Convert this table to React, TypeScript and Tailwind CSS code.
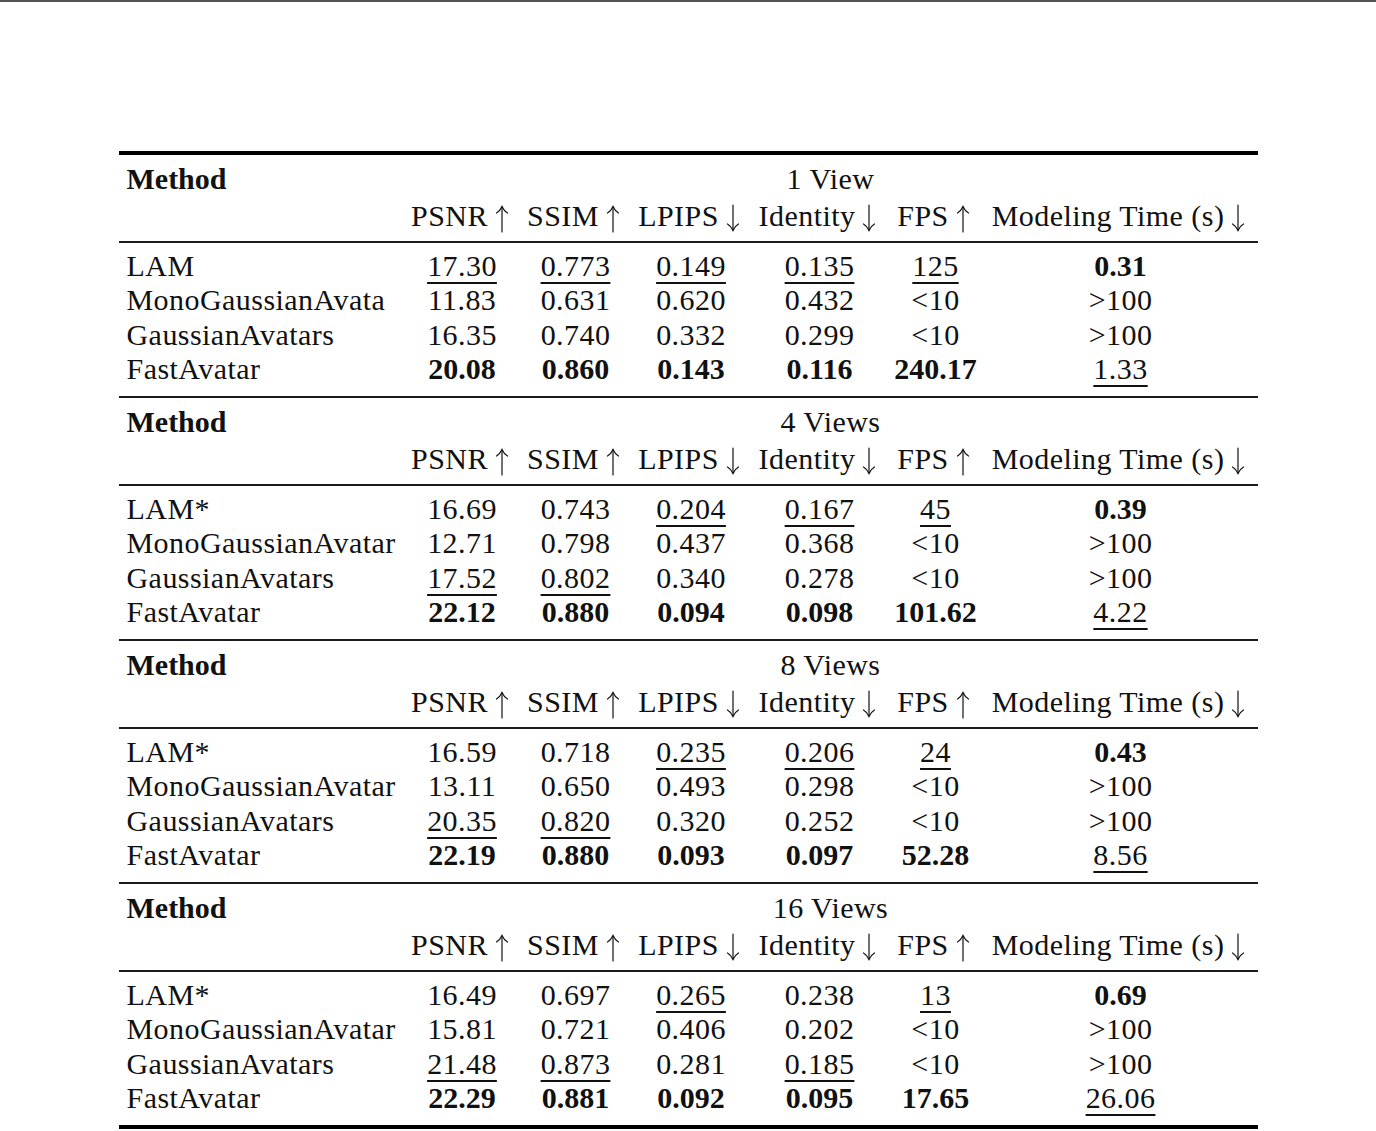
type Cell = { v: string; s?: "b" | "u" };

type Block = {
  title: string;
  rows: { name: string; cells: Cell[] }[];
};

const u = (v: string): Cell => ({ v, s: "u" });
const b = (v: string): Cell => ({ v, s: "b" });
const n = (v: string): Cell => ({ v });

const blocks: Block[] = [
  {
    title: "1 View",
    rows: [
      { name: "LAM", cells: [u("17.30"), u("0.773"), u("0.149"), u("0.135"), u("125"), b("0.31")] },
      { name: "MonoGaussianAvata", cells: [n("11.83"), n("0.631"), n("0.620"), n("0.432"), n("<10"), n(">100")] },
      { name: "GaussianAvatars", cells: [n("16.35"), n("0.740"), n("0.332"), n("0.299"), n("<10"), n(">100")] },
      { name: "FastAvatar", cells: [b("20.08"), b("0.860"), b("0.143"), b("0.116"), b("240.17"), u("1.33")] },
    ],
  },
  {
    title: "4 Views",
    rows: [
      { name: "LAM*", cells: [n("16.69"), n("0.743"), u("0.204"), u("0.167"), u("45"), b("0.39")] },
      { name: "MonoGaussianAvatar", cells: [n("12.71"), n("0.798"), n("0.437"), n("0.368"), n("<10"), n(">100")] },
      { name: "GaussianAvatars", cells: [u("17.52"), u("0.802"), n("0.340"), n("0.278"), n("<10"), n(">100")] },
      { name: "FastAvatar", cells: [b("22.12"), b("0.880"), b("0.094"), b("0.098"), b("101.62"), u("4.22")] },
    ],
  },
  {
    title: "8 Views",
    rows: [
      { name: "LAM*", cells: [n("16.59"), n("0.718"), u("0.235"), u("0.206"), u("24"), b("0.43")] },
      { name: "MonoGaussianAvatar", cells: [n("13.11"), n("0.650"), n("0.493"), n("0.298"), n("<10"), n(">100")] },
      { name: "GaussianAvatars", cells: [u("20.35"), u("0.820"), n("0.320"), n("0.252"), n("<10"), n(">100")] },
      { name: "FastAvatar", cells: [b("22.19"), b("0.880"), b("0.093"), b("0.097"), b("52.28"), u("8.56")] },
    ],
  },
  {
    title: "16 Views",
    rows: [
      { name: "LAM*", cells: [n("16.49"), n("0.697"), u("0.265"), n("0.238"), u("13"), b("0.69")] },
      { name: "MonoGaussianAvatar", cells: [n("15.81"), n("0.721"), n("0.406"), n("0.202"), n("<10"), n(">100")] },
      { name: "GaussianAvatars", cells: [u("21.48"), u("0.873"), n("0.281"), u("0.185"), n("<10"), n(">100")] },
      { name: "FastAvatar", cells: [b("22.29"), b("0.881"), b("0.092"), b("0.095"), b("17.65"), u("26.06")] },
    ],
  },
];

const headers: { label: string; up: boolean }[] = [
  { label: "PSNR", up: true },
  { label: "SSIM", up: true },
  { label: "LPIPS", up: false },
  { label: "Identity", up: false },
  { label: "FPS", up: true },
  { label: "Modeling Time (s)", up: false },
];

const grid = "grid grid-cols-[285px_117px_110px_121px_136px_96px_274px]";

function Arrow({ up }: { up: boolean }) {
  // thin computer-modern style arrow
  return (
    <svg
      width="22"
      height="29"
      viewBox="0 0 22 29"
      className="ml-[3px] inline-block align-[-7px]"
      fill="none"
      stroke="#111"
      strokeWidth="1.2"
      strokeLinecap="round"
    >
      {up ? (
        <>
          <path d="M11 3 L11 28" />
          <path d="M5.5 9 Q9 7 11 2.5 Q13 7 16.5 9" />
        </>
      ) : (
        <>
          <path d="M11 1 L11 26" />
          <path d="M5.5 20 Q9 22 11 26.5 Q13 22 16.5 20" />
        </>
      )}
    </svg>
  );
}

function Value({ c }: { c: Cell }) {
  if (c.s === "b") return <span className="font-bold tracking-normal">{c.v}</span>;
  if (c.s === "u")
    return (
      <span className="underline underline-offset-[6px] [text-decoration-thickness:1.5px]">
        {c.v}
      </span>
    );
  return <span>{c.v}</span>;
}

function TableBlock({ block, first }: { block: Block; first: boolean }) {
  return (
    <div>
      <div className={first ? "h-[4px] bg-black" : "h-[2px] bg-[#1c1c1c]"} />
      <div className={`${grid} pt-[7px]`}>
        <div className="pl-[8px] font-bold tracking-normal">Method</div>
        <div className="col-span-6 text-center">{block.title}</div>
      </div>
      <div className={`${grid} pt-[2.5px] pb-[7px]`}>
        <div />
        {headers.map((h) => (
          <div key={h.label} className="whitespace-nowrap text-center">
            {h.label}
            <Arrow up={h.up} />
          </div>
        ))}
      </div>
      <div className="h-[2px] bg-[#1c1c1c]" />
      <div className="pt-[6px] pb-[9.5px]">
        {block.rows.map((r) => (
          <div key={r.name} className={grid}>
            <div className="whitespace-nowrap pl-[8px]">{r.name}</div>
            {r.cells.map((c, i) => (
              <div key={i} className="text-center">
                <Value c={c} />
              </div>
            ))}
          </div>
        ))}
      </div>
    </div>
  );
}

export default function App() {
  return (
    <div
      className="min-h-[1131px] w-[1376px] bg-white text-[30px] leading-[34.5px] tracking-[0.45px] text-[#111]"
      style={{ fontFamily: '"Liberation Serif", "Times New Roman", serif' }}
    >
      <div className="h-[2px] bg-[#555]" />
      <div className="mx-auto mt-[149px] w-[1139px]">
        {blocks.map((bl, i) => (
          <TableBlock key={bl.title} block={bl} first={i === 0} />
        ))}
        <div className="h-[4px] bg-black" />
      </div>
    </div>
  );
}
